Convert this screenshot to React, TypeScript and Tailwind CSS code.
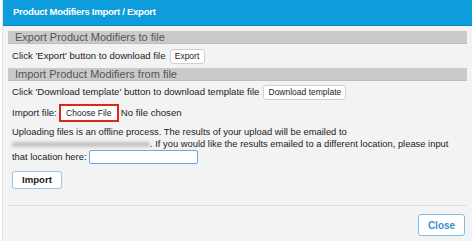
export default function App() {
  return (
    <div className="w-[474px] h-[243px] bg-white overflow-hidden font-['Liberation_Sans',Arial,sans-serif]">
      <div className="h-[241px] mx-[2px] bg-[#f4f3f3] border-l border-[#e2e2e2]">
        {/* Header */}
        <div className="h-[26px] bg-[#0d9ddc] border-b border-[#0a86c0] flex items-center px-[10px]">
          <span className="text-white font-bold text-[9.6px] tracking-[-0.3px]">Product Modifiers Import / Export</span>
        </div>

        <div className="pl-[5px] pr-[5px] pt-[5px]">
          {/* Export section */}
          <div className="h-[13px] bg-[#cacaca] border-b border-[#bdbdbd] flex items-center px-[7px] text-[11px] text-[#555]">
            Export Product Modifiers to file
          </div>
          <div className="h-[24px] flex items-center gap-[4px] px-[4px] text-[9.6px] text-[#222]">
            <span>Click 'Export' button to download file</span>
            <button className="h-[15px] w-[35px] bg-white border border-[#cfcfcf] rounded-[3px] text-[8.5px] text-[#222]">Export</button>
          </div>

          {/* Import section */}
          <div className="h-[13px] bg-[#cacaca] border-b border-[#bdbdbd] flex items-center px-[7px] text-[11px] text-[#555]">
            Import Product Modifiers from file
          </div>
          <div className="h-[22px] flex items-center gap-[4px] px-[4px] text-[9.6px] text-[#222]">
            <span>Click 'Download template' button to download template file</span>
            <button className="h-[15px] w-[83px] bg-white border border-[#cfcfcf] rounded-[3px] text-[8.5px] text-[#222]">Download template</button>
          </div>
          <div className="h-[20px] flex items-center gap-[2px] px-[4px] text-[9.6px] text-[#222]">
            <span>Import file:</span>
            <button className="h-[18px] w-[60px] bg-white border-2 border-[#e0261b] text-[8.5px] text-[#222]">Choose File</button>
            <span>No file chosen</span>
          </div>
          <div className="px-[4px] pt-[3px] text-[9.4px] leading-[12px] text-[#222]">
            <div className="h-[12px]">Uploading files is an offline process. The results of your upload will be emailed to</div>
            <div className="h-[12px] flex items-center whitespace-nowrap">
              <span className="inline-block w-[138px] h-[5px] bg-[#c4c4c4] blur-[1.5px] rounded-sm" />
              <span>. If you would like the results emailed to a different location, please input</span>
            </div>
            <div className="h-[14px] flex items-center gap-[2px]">
              <span>that location here:</span>
              <input className="w-[109px] h-[14px] bg-white border border-[#6aa7e6] rounded-[2px] outline-none" />
            </div>
          </div>
          <div className="flex px-[4px] pt-[7px]">
            <button className="w-[50px] h-[18px] bg-white border border-[#9cc3e8] rounded-[3px] text-[9.6px] font-bold text-[#222]">Import</button>
          </div>
          <div className="mt-[16px] border-t border-[#dedede]" />
          <div className="flex justify-end pt-[8px] pr-[2px]">
            <button className="w-[47px] h-[22px] bg-white border border-[#7fbde3] rounded-[3px] text-[10px] font-bold text-[#3a8fcf]">Close</button>
          </div>
        </div>
      </div>
    </div>
  );
}
